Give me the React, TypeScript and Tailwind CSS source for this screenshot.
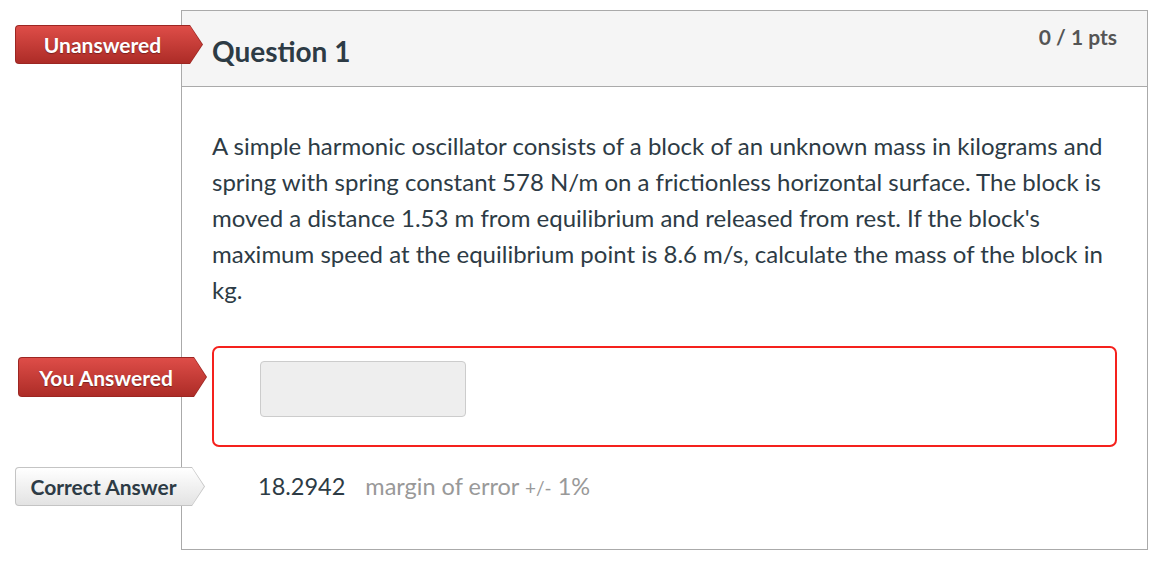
import type { ReactNode } from "react";

const font = { fontFamily: "Lato, 'Noto Sans', 'Liberation Sans', sans-serif" };

type Tone = "red" | "gray";

function AnswerTag({ tone, children, className }: { tone: Tone; children: ReactNode; className: string }) {
	return (
		<div className={["absolute", className].join(" ")}>
			<div
				className={[
					"absolute inset-0 rounded-l-[4px]",
					"[clip-path:polygon(0_0,calc(100%-13px)_0,100%_50%,calc(100%-13px)_100%,0_100%)]",
					tone === "red" ? "bg-[#9c2622]" : "bg-[#c4c4c4]",
				].join(" ")}
			/>
			<div
				className={[
					"absolute inset-[1px] rounded-l-[3px]",
					"[clip-path:polygon(0_0,calc(100%-12px)_0,100%_50%,calc(100%-12px)_100%,0_100%)]",
					tone === "red"
						? "bg-gradient-to-b from-[#de4d48] to-[#ad2c27]"
						: "bg-gradient-to-b from-[#ffffff] to-[#e3e3e3]",
				].join(" ")}
			/>
			<span
				className={[
					"relative flex h-full items-center justify-center pr-[13px] text-[21px] font-bold leading-none",
					tone === "red" ? "text-white [text-shadow:0_1px_1px_rgba(0,0,0,0.35)]" : "text-[#2d3b45]",
				].join(" ")}
			>
				{children}
			</span>
		</div>
	);
}

export default function App() {
	return (
		<div className="min-h-[561px] bg-white pl-[181px] pt-[10px]" style={font}>
			<section className="relative h-[540px] w-[967px] border border-[#aaaaaa] bg-white">
				<AnswerTag tone="red" className="-left-[167px] top-[14px] h-[39px] w-[188px]">
					Unanswered
				</AnswerTag>
				<header className="flex h-[76px] items-start justify-between border-b border-[#aaaaaa] bg-[#f5f5f5] px-[30px]">
					<h2 className="m-0 pt-[24px] text-[28px] font-bold leading-[32px] text-[#2d3b45]">Question 1</h2>
					<span className="pt-[14px] text-[21px] font-bold leading-[24px] text-[#555555]">0 / 1 pts</span>
				</header>
				<div className="px-[30px] pt-[41px]">
					<p className="m-0 text-[24px] leading-[36px] text-[#2d3b45]">
						A simple harmonic oscillator consists of a block of an unknown mass in kilograms and spring with
						spring constant 578 N/m on a frictionless horizontal surface. The block is moved a distance 1.53 m
						from equilibrium and released from rest. If the block's maximum speed at the equilibrium point is
						8.6 m/s, calculate the mass of the block in kg.
					</p>
					<div className="relative mt-[38px] h-[101px] rounded-[7px] border-2 border-[#f5211d] pl-[46px] pt-[13px]">
						<AnswerTag tone="red" className="-left-[196px] top-[9px] h-[40px] w-[189px]">
							You Answered
						</AnswerTag>
						<div className="h-[56px] w-[206px] rounded-[4px] border border-[#cccccc] bg-[#eeeeee]" />
					</div>
				</div>
				<div className="relative mt-[20px] flex h-[39px] items-center pl-[76px]">
					<AnswerTag tone="gray" className="-left-[167px] top-0 h-[39px] w-[190px]">
						Correct Answer
					</AnswerTag>
					<span className="text-[23.5px] text-[#2d3b45]">18.2942</span>
					<span className="ml-[20px] text-[23.5px] text-[#999999]">
						margin of error <span className="text-[19px]">+/-</span> 1%
					</span>
				</div>
			</section>
		</div>
	);
}
